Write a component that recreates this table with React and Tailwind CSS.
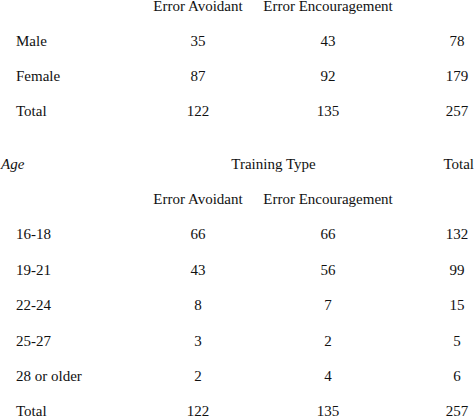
function Row({ label, a, b, t }) {
  return (
    <div className="flex h-[35.4px] leading-[35.4px] whitespace-nowrap">
      <div className="w-[134px] shrink-0 pl-4">{label}</div>
      <div className="w-[128px] shrink-0 text-center">{a}</div>
      <div className="w-[132px] shrink-0 text-center">{b}</div>
      <div className="w-[126px] shrink-0 text-center">{t}</div>
    </div>
  );
}

export default function App() {
  const gender = [
    ["Male", "35", "43", "78"],
    ["Female", "87", "92", "179"],
    ["Total", "122", "135", "257"],
  ];
  const age = [
    ["16-18", "66", "66", "132"],
    ["19-21", "43", "56", "99"],
    ["22-24", "8", "7", "15"],
    ["25-27", "3", "2", "5"],
    ["28 or older", "2", "4", "6"],
    ["Total", "122", "135", "257"],
  ];
  return (
    <div className="w-[474px] h-[420px] overflow-hidden bg-white text-[#111] text-[15px] font-['Liberation_Serif','Times_New_Roman',serif]">
      <div className="flex flex-col">
        <div className="flex h-[23.5px] leading-[12px] whitespace-nowrap">
          <div className="w-[134px] shrink-0" />
          <div className="w-[128px] shrink-0 text-center">Error Avoidant</div>
          <div className="w-[132px] shrink-0 text-center">Error Encouragement</div>
        </div>
        {gender.map((r) => (
          <Row key={r[0]} label={r[0]} a={r[1]} b={r[2]} t={r[3]} />
        ))}
        <div className="h-[17px]" />
        <div className="flex h-[35.4px] leading-[35.4px] whitespace-nowrap">
          <div className="w-[134px] shrink-0 pl-[1px] italic">Age</div>
          <div className="w-[279px] shrink-0 text-center">Training Type</div>
          <div className="w-[61px] shrink-0 text-right">Total</div>
        </div>
        <Row label="" a="Error Avoidant" b="Error Encouragement" t="" />
        {age.map((r) => (
          <Row key={r[0]} label={r[0]} a={r[1]} b={r[2]} t={r[3]} />
        ))}
      </div>
    </div>
  );
}
